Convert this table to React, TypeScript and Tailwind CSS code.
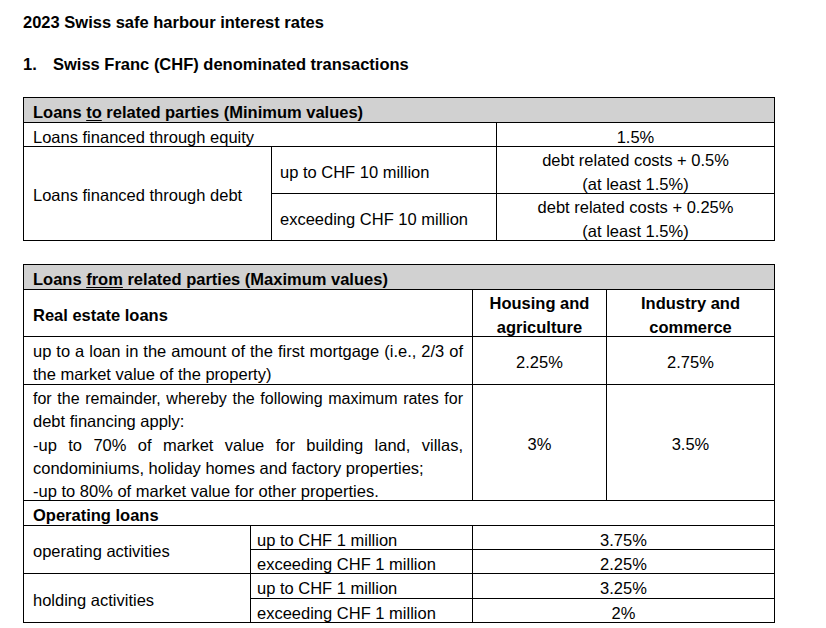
import React from "react";

const J = "[text-align-last:justify] text-justify";

export default function App() {
  return (
    <div className="min-h-[628px] w-[826px] bg-white text-black font-['Liberation_Sans',Arial,sans-serif] text-[16.5px] leading-[23.2px] pl-[23px] pt-[11px]">
      <div className="font-bold">2023 Swiss safe harbour interest rates</div>
      <div className="font-bold mt-[18.7px]">
        <span className="inline-block w-[30px]">1.</span>Swiss Franc (CHF) denominated transactions
      </div>

      {/* Table 1 */}
      <div className="mt-[21px] w-[752px] bg-black p-px grid gap-px grid-cols-[247px_224px_277px] grid-rows-[24px_23px_46px_46px]">
        <div className="col-span-3 bg-[#d1d1d1] flex items-center pt-[5px] pl-[9px] font-bold">
          <span>
            Loans <span className="underline underline-offset-[2px]">to</span> related parties (Minimum values)
          </span>
        </div>
        <div className="col-span-2 bg-white flex items-center pt-[5px] pl-[9px]">Loans financed through equity</div>
        <div className="bg-white flex items-center justify-center pt-[5px] text-center">1.5%</div>

        <div className="row-span-2 bg-white flex items-center pt-[5px] pl-[9px]">Loans financed through debt</div>
        <div className="bg-white flex items-center pt-[5px] pl-[8px]">up to CHF 10 million</div>
        <div className="bg-white flex items-center justify-center pt-[5px] text-center">
          <div>
            <div>debt related costs + 0.5%</div>
            <div>(at least 1.5%)</div>
          </div>
        </div>
        <div className="bg-white flex items-center pt-[5px] pl-[8px]">exceeding CHF 10 million</div>
        <div className="bg-white flex items-center justify-center pt-[5px] text-center">
          <div>
            <div>debt related costs + 0.25%</div>
            <div>(at least 1.5%)</div>
          </div>
        </div>
      </div>

      {/* Table 2 */}
      <div className="mt-[23px] w-[752px] bg-black p-px grid gap-px grid-cols-[226px_221px_133px_167px] grid-rows-[24px_46px_47px_115px_24px_23px_23px_24px_23px]">
        <div className="col-span-4 bg-[#d1d1d1] flex items-center pt-[5px] pl-[9px] font-bold">
          <span>
            Loans <span className="underline underline-offset-[2px]">from</span> related parties (Maximum values)
          </span>
        </div>

        <div className="col-span-2 bg-white flex items-center pt-[5px] pl-[9px] font-bold">Real estate loans</div>
        <div className="bg-white flex items-center justify-center pt-[5px] text-center font-bold">
          <div>
            <div>Housing and</div>
            <div>agriculture</div>
          </div>
        </div>
        <div className="bg-white flex items-center justify-center pt-[5px] text-center font-bold">
          <div>
            <div>Industry and</div>
            <div>commerce</div>
          </div>
        </div>

        <div className="col-span-2 bg-white flex items-center pt-[5px] px-[9px]">
          <div className="w-full">
            <div className={J}>up to a loan in the amount of the first mortgage (i.e., 2/3 of</div>
            <div>the market value of the property)</div>
          </div>
        </div>
        <div className="bg-white flex items-center justify-center pt-[5px] text-center">2.25%</div>
        <div className="bg-white flex items-center justify-center pt-[5px] text-center">2.75%</div>

        <div className="col-span-2 bg-white flex items-center pt-[5px] px-[9px]">
          <div className="w-full">
            <div className={`${J} text-[16px]`}>for the remainder, whereby the following maximum rates for</div>
            <div>debt financing apply:</div>
            <div className={J}>-up to 70% of market value for building land, villas,</div>
            <div>condominiums, holiday homes and factory properties;</div>
            <div>-up to 80% of market value for other properties.</div>
          </div>
        </div>
        <div className="bg-white flex items-center justify-center pt-[5px] text-center">3%</div>
        <div className="bg-white flex items-center justify-center pt-[5px] text-center">3.5%</div>

        <div className="col-span-4 bg-white flex items-center pt-[5px] pl-[9px] font-bold">Operating loans</div>

        <div className="row-span-2 bg-white flex items-center pt-[5px] pl-[9px]">operating activities</div>
        <div className="bg-white flex items-center pt-[5px] pl-[6px]">up to CHF 1 million</div>
        <div className="col-span-2 bg-white flex items-center justify-center pt-[5px] text-center">3.75%</div>
        <div className="bg-white flex items-center pt-[5px] pl-[6px]">exceeding CHF 1 million</div>
        <div className="col-span-2 bg-white flex items-center justify-center pt-[5px] text-center">2.25%</div>

        <div className="row-span-2 bg-white flex items-center pt-[5px] pl-[9px]">holding activities</div>
        <div className="bg-white flex items-center pt-[5px] pl-[6px]">up to CHF 1 million</div>
        <div className="col-span-2 bg-white flex items-center justify-center pt-[5px] text-center">3.25%</div>
        <div className="bg-white flex items-center pt-[5px] pl-[6px]">exceeding CHF 1 million</div>
        <div className="col-span-2 bg-white flex items-center justify-center pt-[5px] text-center">2%</div>
      </div>
    </div>
  );
}
